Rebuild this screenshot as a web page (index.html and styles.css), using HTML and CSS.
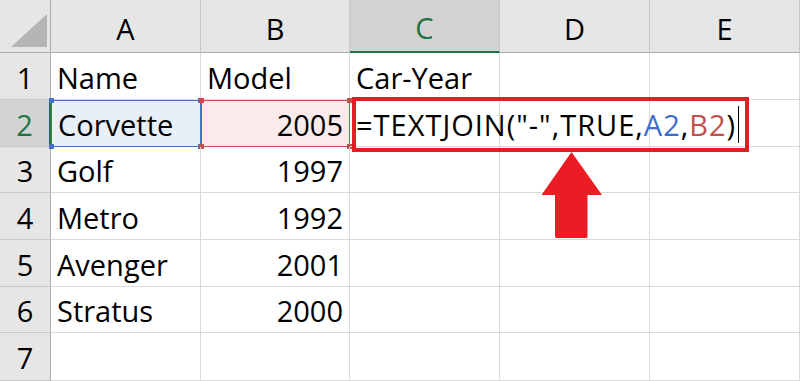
FILE: index.html
```
<!DOCTYPE html>
<html lang="en">

<head>
    <meta charset="UTF-8">
    <title>TEXTJOIN</title>
    <link rel="stylesheet" href="styles.css">
</head>

<body>
    <div class="sheet">
        <div class="grid">
            <!-- column headers -->
            <div class="ch corner"><div class="tri"></div></div>
            <div class="ch">A</div>
            <div class="ch">B</div>
            <div class="ch active-col">C</div>
            <div class="ch">D</div>
            <div class="ch">E</div>

            <div class="rh">1</div>
            <div class="cell">Name</div>
            <div class="cell">Model</div>
            <div class="cell">Car-Year</div>
            <div class="cell"></div>
            <div class="cell"></div>

            <div class="rh active-row">2</div>
            <div class="cell ref-a">Corvette<span class="dot tl"></span><span class="dot tr"></span><span class="dot bl"></span><span class="dot br"></span></div>
            <div class="cell num ref-b">2005<span class="dot tl"></span><span class="dot tr"></span><span class="dot bl"></span><span class="dot br"></span></div>
            <div class="cell edit">=TEXTJOIN("-",TRUE,<span class="blue">A2</span>,<span class="red">B2</span>)<span class="caret"></span></div>
            <div class="cell"></div>
            <div class="cell"></div>

            <div class="rh">3</div>
            <div class="cell">Golf</div>
            <div class="cell num">1997</div>
            <div class="cell"></div>
            <div class="cell"></div>
            <div class="cell"></div>

            <div class="rh">4</div>
            <div class="cell">Metro</div>
            <div class="cell num">1992</div>
            <div class="cell"></div>
            <div class="cell"></div>
            <div class="cell"></div>

            <div class="rh">5</div>
            <div class="cell">Avenger</div>
            <div class="cell num">2001</div>
            <div class="cell"></div>
            <div class="cell"></div>
            <div class="cell"></div>

            <div class="rh">6</div>
            <div class="cell">Stratus</div>
            <div class="cell num">2000</div>
            <div class="cell"></div>
            <div class="cell"></div>
            <div class="cell"></div>

            <div class="rh">7</div>
            <div class="cell"></div>
            <div class="cell"></div>
            <div class="cell"></div>
            <div class="cell"></div>
            <div class="cell"></div>
        </div>

        <!-- highlight box and arrow drawn over the grid -->
        <div class="highlight"></div>
        <svg class="arrow" width="62" height="88" viewBox="0 0 62 88">
            <path d="M30.5 1 L61 44 L46.5 44 L46.5 85.5 Q46.5 87 45 87 L15.5 87 Q14 87 14 85.5 L14 44 L0.5 44 Z" fill="#ec1c24"/>
        </svg>
    </div>
</body>

</html>
```

FILE: styles.css
```
/* General styles */
body {
    margin: 0;
    background: #fff;
    font-family: "Open Sans", "Liberation Sans", sans-serif;
    overflow: hidden;
}

.sheet {
    position: relative;
    width: 800px;
    height: 381px;
}

/* Spreadsheet grid */
.grid {
    display: grid;
    grid-template-columns: 51px 150px 149px 150px 150px 150px;
    grid-template-rows: 53px 47px 47px 46px 47px 47px 46px 48px;
    font-size: 29px;
    color: #000;
}

/* Column headers */
.ch {
    background: #e6e6e6;
    border-right: 1px solid #c8c8c8;
    border-bottom: 1px solid #acacac;
    box-sizing: border-box;
    display: flex;
    align-items: center;
    justify-content: center;
    padding-top: 4px;
}

.ch.active-col {
    background: #d3d3d3;
    color: #217346;
    border-bottom: 2px solid #217346;
}

.corner {
    justify-content: flex-end;
    align-items: flex-end;
    padding: 0 3px 5px 0;
    border-right: 1px solid #acacac;
}

.tri {
    width: 36px;
    height: 33px;
    background: #b5b5b5;
    clip-path: polygon(100% 0, 100% 100%, 0 100%);
}

/* Row headers */
.rh {
    background: #e6e6e6;
    border-right: 1px solid #acacac;
    border-bottom: 1px solid #c8c8c8;
    box-sizing: border-box;
    display: flex;
    align-items: center;
    justify-content: center;
    padding-top: 2px;
}

.rh.active-row {
    background: #d3d3d3;
    color: #217346;
    border-right: 2px solid #217346;
}

/* Cells */
.cell {
    position: relative;
    border-right: 1px solid #d9d9d9;
    border-bottom: 1px solid #d9d9d9;
    box-sizing: border-box;
    display: flex;
    align-items: center;
    padding: 2px 6px 0;
    white-space: nowrap;
}

.cell.num {
    justify-content: flex-end;
}

.cell.edit {
    overflow: visible;
    z-index: 1;
    letter-spacing: 1px;
}

.ref-a {
    background: #e9eff8;
    border: 1px solid #4472c4;
}

.ref-b {
    background: #fbeaea;
    border: 1px solid #c0504d;
}

/* reference handles */
.dot {
    position: absolute;
    width: 5px;
    height: 5px;
}

.ref-a .dot {
    background: #4472c4;
}

.ref-b .dot {
    background: #c0504d;
}

.dot.tl { left: -3px; top: -3px; }
.dot.tr { right: -3px; top: -3px; }
.dot.bl { left: -3px; bottom: -3px; }
.dot.br { right: -3px; bottom: -3px; }

.blue {
    color: #3c6ccf;
}

.red {
    color: #c0504d;
}

.caret {
    display: inline-block;
    flex: none;
    width: 1px;
    height: 37px;
    background: #000;
    margin-left: 2px;
}

/* Red box around the formula */
.highlight {
    position: absolute;
    left: 352px;
    top: 97px;
    width: 397px;
    height: 55px;
    border: 4px solid #e51c23;
    box-sizing: border-box;
    z-index: 2;
}

.arrow {
    position: absolute;
    left: 541px;
    top: 151px;
}
```
